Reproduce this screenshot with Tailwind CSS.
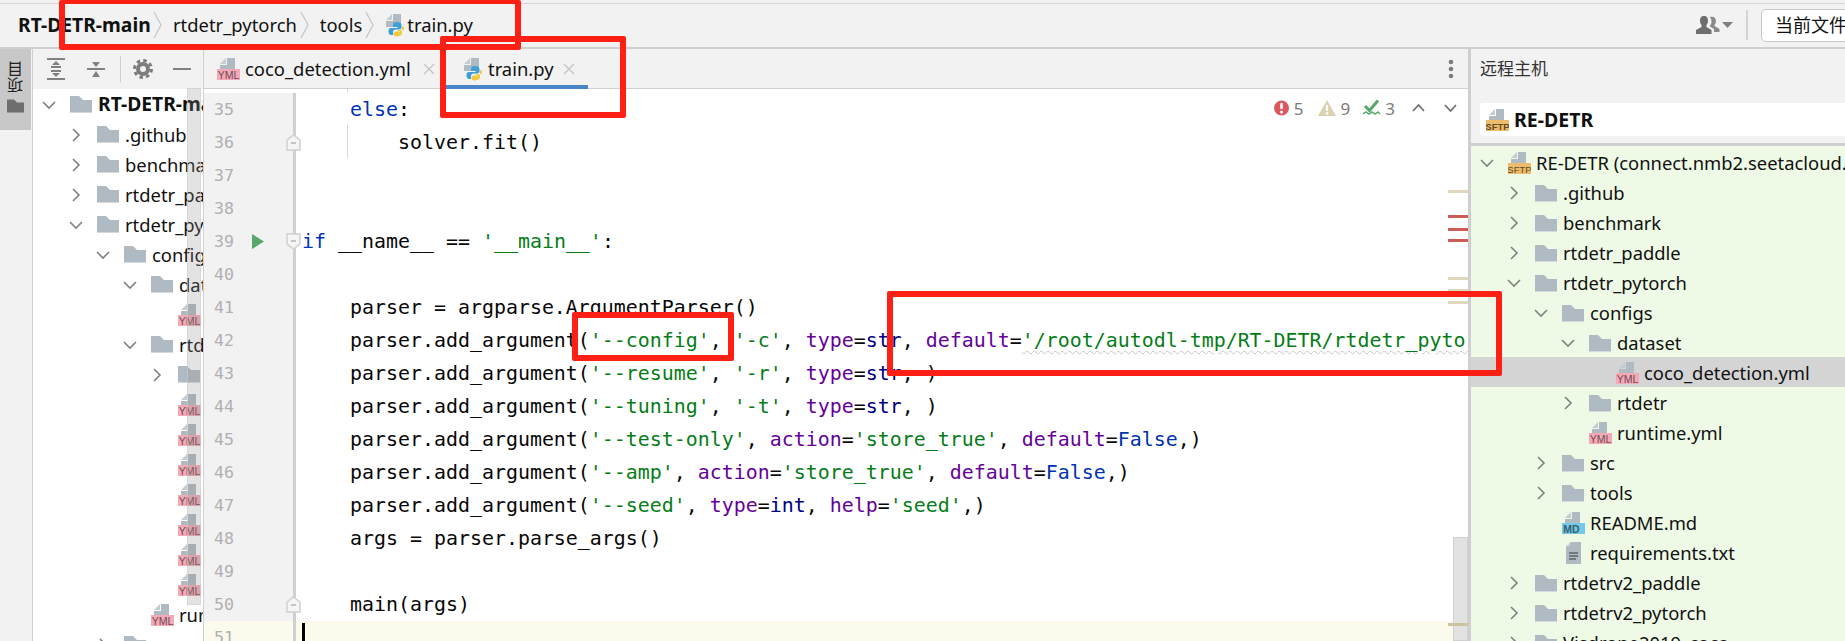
<!DOCTYPE html>
<html lang="zh">
<head>
    <meta charset="UTF-8">
    <title>train.py</title>
    <script src="https://cdn.jsdelivr.net/npm/@tailwindcss/browser@4"></script>
</head>
<body class="bg-[#f2f2f2]">
    <!-- shared icons -->
    <svg class="hidden">
        <defs>
            <symbol id="folder" viewBox="0 0 22 17"><path d="M0 0h9l4 4h9v13H0z" fill="#afbac2"/><path d="M0 16.5h22" stroke="#d3dade"/></symbol>
            <symbol id="right" viewBox="0 0 16 16"><path d="M5 2l6 6-6 6" fill="none" stroke="#808080" stroke-width="1.6"/></symbol>
            <symbol id="down" viewBox="0 0 16 16"><path d="M2 5l6 6 6-6" fill="none" stroke="#808080" stroke-width="1.6"/></symbol>
            <symbol id="sheet" viewBox="0 0 23 24"><path d="M10 1h8v11H3V8h7z" fill="#afbac2"/><path d="M9 1v6H3z" fill="#c4ccd2"/></symbol>
            <symbol id="yml" viewBox="0 0 23 24"><use href="#sheet"/><rect y="12" width="23" height="11" fill="#f5a9b6"/><text x="11.5" y="21.5" text-anchor="middle" font-size="10.5" font-family="Liberation Sans" fill="#6f4a55">YML</text></symbol>
            <symbol id="sftp" viewBox="0 0 23 24"><use href="#sheet"/><rect y="12" width="23" height="11" fill="#edbb6c"/><text x="11.5" y="21.5" text-anchor="middle" font-size="9.5" font-family="Liberation Sans" fill="#5f4a25">SFTP</text></symbol>
            <symbol id="md" viewBox="0 0 23 24"><use href="#sheet"/><rect y="12" width="23" height="11" fill="#74c9e6"/><text x="9.5" y="21.5" text-anchor="middle" font-size="10.5" font-weight="bold" font-family="Liberation Sans" fill="#35616f">MD</text></symbol>
            <symbol id="txt" viewBox="0 0 23 24"><path d="M9 1h10v22H4V6z" fill="#afbac2"/><path d="M8 1v4H4z" fill="#d5dadd"/><path d="M7 12h9M7 15h9M7 18h7" stroke="#5e6468" stroke-width="1.3"/></symbol>
            <symbol id="py" viewBox="0 0 20 24"><path d="M9 1h8v13H2V8h7z" fill="#afbac2"/><path d="M8 1v6H2z" fill="#c4ccd2"/><path d="M13 9c-3 0-4 1-4 3v2h4.500v1H7c-2 0-2.500 1.500-2.500 3.500S5.500 22 7 22h2v-2.500c0-2 1-3 3-3h3c1.500 0 2.500-1 2.500-2V12c0-2-1.500-3-4.500-3z" fill="#3f9fd8"/><path d="M14 23c3 0 4-1 4-3v-2h-4.500v-1H19c1 0 1.500-1 1.500-3.500H18v2c0 2-1 3-3 3h-3c-1.500 0-2.500 1-2.500 2v.5c0 2 1.500 2.500 4.500 2.500z" fill="#f5c93d"/></symbol>
            <symbol id="fold" viewBox="0 0 15 17"><path d="M1 6l6.500-5L14 6v10H1z" fill="#f5f5f5" stroke="#d0d0d0" stroke-width="1.500"/><path d="M5 9h5" stroke="#b5b5b5" stroke-width="1.500"/></symbol>
        </defs>
    </svg>

    <div class="relative w-[1845px] h-[641px] overflow-hidden flex flex-col bg-[#f2f2f2] text-[18.4px] text-[#111] font-['Noto_Sans','Noto_Sans_CJK_SC',sans-serif]">

        <!-- top toolbar -->
        <div class="h-[49px] shrink-0 border-b-2 border-[#cfcfcf] flex flex-col">
            <div class="h-[4px] shrink-0 border-b border-[#d6d6d6]"></div>
            <div class="flex-1 flex items-center pl-[18px] pb-[1px] [&_svg]:shrink-0">
                <span class="font-bold text-[19.3px] w-[132px] whitespace-nowrap">RT-DETR-main</span>
                <svg class="w-[10px] h-[28px] ml-[3px] mr-[10px]" viewBox="0 0 10 28"><path d="M1 1l7 13-7 13" fill="none" stroke="#c4c4c4" stroke-width="1.200"/></svg>
                <span class="whitespace-nowrap">rtdetr_pytorch</span>
                <svg class="w-[10px] h-[28px] ml-[3px] mr-[10px]" viewBox="0 0 10 28"><path d="M1 1l7 13-7 13" fill="none" stroke="#c4c4c4" stroke-width="1.200"/></svg>
                <span>tools</span>
                <svg class="w-[10px] h-[28px] ml-[3px] mr-[9px]" viewBox="0 0 10 28"><path d="M1 1l7 13-7 13" fill="none" stroke="#c4c4c4" stroke-width="1.200"/></svg>
                <svg class="w-[20px] h-[24px] mr-[3px]"><use href="#py"/></svg>
                <span>train.py</span>
                <div class="ml-auto -mr-[16px] flex items-center">
                    <svg class="w-[24px] h-[20px]" viewBox="0 0 24 20"><path d="M8 1c3 0 4 2 4 5 0 2-1 3-1.500 4v2l5 3v4H0v-4l5.500-3v-2C5 9 4 8 4 6c0-3 1-5 4-5z" fill="#6e6e6e"/><path d="M14 2c3-1 6 0 6 4 0 2-1 3-1.500 4v1l5 3v3H18v-3l-4-2.500v-1c1-1 1.500-2.500 1.500-4 0-1.500-.5-3-1.500-4.500z" fill="#8a8a8a"/></svg>
                    <svg class="w-[11px] h-[6px] ml-[2px]" viewBox="0 0 11 6"><path d="M0 0h11L5.500 6z" fill="#808080"/></svg>
                    <div class="w-[2px] h-[30px] bg-[#d4d4d4] ml-[13px] mr-[13px]"></div>
                    <div class="w-[100px] h-[33px] bg-white border border-[#c8c8c8] rounded-[5px] pl-[13px] flex items-center whitespace-nowrap text-[18px]">当前文件</div>
                </div>
            </div>
        </div>

        <div class="flex-1 flex min-h-0">
            <!-- left tool stripe -->
            <div class="w-[33px] shrink-0 border-r border-[#cfcfcf]">
                <div class="w-[31px] h-[81px] bg-[#c8c8c8] flex flex-col items-center pt-[12px] gap-[6px]">
                    <span class="[writing-mode:vertical-rl] rotate-180 text-[16px] leading-none text-[#222]">项目</span>
                    <svg class="w-[17px] h-[14px] shrink-0" viewBox="0 0 22 17"><path d="M0 0h9l4 4h9v13H0z" fill="#6e6e6e"/></svg>
                </div>
            </div>

            <!-- project panel -->
            <div class="relative w-[170px] shrink-0 overflow-hidden flex flex-col">
                <div class="h-[40px] shrink-0 flex items-center [&_svg]:shrink-0">
                    <svg class="w-[18px] h-[22px] ml-[14px]" viewBox="0 0 18 22"><path d="M0 1h18M0 21h18M4 9h10M4 13h10" stroke="#808080" stroke-width="2"/><path d="M9 3l4 4H5zM9 19l4-4H5z" fill="#808080"/></svg>
                    <svg class="w-[18px] h-[22px] ml-[22px]" viewBox="0 0 18 22"><path d="M0 11h18" stroke="#808080" stroke-width="2"/><path d="M9 9L5 4h8zM9 13l4 6H5z" fill="#808080"/></svg>
                    <div class="w-[1px] h-[26px] bg-[#d0d0d0] ml-[15px]"></div>
                    <svg class="w-[20px] h-[20px] ml-[12px]" viewBox="0 0 20 20"><circle cx="10" cy="10" r="5" fill="none" stroke="#7d7d7d" stroke-width="4"/><circle cx="10" cy="10" r="8.500" fill="none" stroke="#7d7d7d" stroke-width="3" stroke-dasharray="3.500 3.170"/></svg>
                    <div class="w-[18px] h-[2px] bg-[#808080] ml-[20px]"></div>
                </div>
                <div class="flex-1 bg-white whitespace-nowrap [&_svg]:shrink-0 [&>div]:pt-[1px]">
                    <div class="flex items-center h-[30px] pl-[8px]"><svg class="w-[16px] h-[16px] mr-[13px]"><use href="#down"/></svg><svg class="w-[22px] h-[17px] mr-[6px]"><use href="#folder"/></svg><b class="text-[19.3px]">RT-DETR-main</b></div>
                    <div class="flex items-center h-[30px] pl-[35px]"><svg class="w-[16px] h-[16px] mr-[13px]"><use href="#right"/></svg><svg class="w-[22px] h-[17px] mr-[6px]"><use href="#folder"/></svg>.github</div>
                    <div class="flex items-center h-[30px] pl-[35px]"><svg class="w-[16px] h-[16px] mr-[13px]"><use href="#right"/></svg><svg class="w-[22px] h-[17px] mr-[6px]"><use href="#folder"/></svg>benchmark</div>
                    <div class="flex items-center h-[30px] pl-[35px]"><svg class="w-[16px] h-[16px] mr-[13px]"><use href="#right"/></svg><svg class="w-[22px] h-[17px] mr-[6px]"><use href="#folder"/></svg>rtdetr_paddle</div>
                    <div class="flex items-center h-[30px] pl-[35px]"><svg class="w-[16px] h-[16px] mr-[13px]"><use href="#down"/></svg><svg class="w-[22px] h-[17px] mr-[6px]"><use href="#folder"/></svg>rtdetr_pytorch</div>
                    <div class="flex items-center h-[30px] pl-[62px]"><svg class="w-[16px] h-[16px] mr-[13px]"><use href="#down"/></svg><svg class="w-[22px] h-[17px] mr-[6px]"><use href="#folder"/></svg>configs</div>
                    <div class="flex items-center h-[30px] pl-[89px]"><svg class="w-[16px] h-[16px] mr-[13px]"><use href="#down"/></svg><svg class="w-[22px] h-[17px] mr-[6px]"><use href="#folder"/></svg>dataset</div>
                    <div class="flex items-center h-[30px] pl-[145px]"><svg class="w-[23px] h-[24px]"><use href="#yml"/></svg></div>
                    <div class="flex items-center h-[30px] pl-[89px]"><svg class="w-[16px] h-[16px] mr-[13px]"><use href="#down"/></svg><svg class="w-[22px] h-[17px] mr-[6px]"><use href="#folder"/></svg>rtdetr</div>
                    <div class="flex items-center h-[30px] pl-[116px]"><svg class="w-[16px] h-[16px] mr-[13px]"><use href="#right"/></svg><svg class="w-[22px] h-[17px] mr-[6px]"><use href="#folder"/></svg></div>
                    <div class="flex items-center h-[30px] pl-[145px]"><svg class="w-[23px] h-[24px]"><use href="#yml"/></svg></div>
                    <div class="flex items-center h-[30px] pl-[145px]"><svg class="w-[23px] h-[24px]"><use href="#yml"/></svg></div>
                    <div class="flex items-center h-[30px] pl-[145px]"><svg class="w-[23px] h-[24px]"><use href="#yml"/></svg></div>
                    <div class="flex items-center h-[30px] pl-[145px]"><svg class="w-[23px] h-[24px]"><use href="#yml"/></svg></div>
                    <div class="flex items-center h-[30px] pl-[145px]"><svg class="w-[23px] h-[24px]"><use href="#yml"/></svg></div>
                    <div class="flex items-center h-[30px] pl-[145px]"><svg class="w-[23px] h-[24px]"><use href="#yml"/></svg></div>
                    <div class="flex items-center h-[30px] pl-[145px]"><svg class="w-[23px] h-[24px]"><use href="#yml"/></svg></div>
                    <div class="flex items-center h-[30px] pl-[118px]"><svg class="w-[23px] h-[24px] mr-[5px]"><use href="#yml"/></svg>runtime.yml</div>
                    <div class="flex items-center h-[30px] pl-[62px]"><svg class="w-[16px] h-[16px] mr-[13px]"><use href="#right"/></svg><svg class="w-[22px] h-[17px] mr-[6px]"><use href="#folder"/></svg>src</div>
                </div>
                <!-- panel scrollbar -->
                <div class="absolute left-[154px] top-[39px] w-[14px] h-[517px] bg-[#8f8f8f]/25 border border-[#cfcfcf]/60"></div>
            </div>

            <!-- editor -->
            <div class="relative w-[1265px] shrink-0 flex flex-col border-l border-[#d0d0d0]">
                <div class="h-[40px] shrink-0 border-b border-[#d0d0d0] flex [&_svg]:shrink-0">
                    <div class="w-[241px] flex items-center pl-[13px] whitespace-nowrap">
                        <svg class="w-[23px] h-[24px] mr-[5px]"><use href="#yml"/></svg>coco_detection.yml
                        <svg class="w-[12px] h-[12px] ml-[12px]" viewBox="0 0 12 12"><path d="M1 1l10 10M11 1L1 11" stroke="#c4c4c4" stroke-width="1.300"/></svg>
                    </div>
                    <div class="w-[143px] h-[40px] flex items-center pl-[17px] border-b-4 border-[#4a86c7] whitespace-nowrap pt-[3px]">
                        <svg class="w-[20px] h-[24px] mr-[6px]"><use href="#py"/></svg>train.py
                        <svg class="w-[12px] h-[12px] ml-[9px]" viewBox="0 0 12 12"><path d="M1 1l10 10M11 1L1 11" stroke="#c4c4c4" stroke-width="1.300"/></svg>
                    </div>
                    <svg class="w-[6px] h-[20px] ml-auto mr-[14px] self-center" viewBox="0 0 6 20"><circle cx="3" cy="3" r="2.300" fill="#7d7d7d"/><circle cx="3" cy="10" r="2.300" fill="#7d7d7d"/><circle cx="3" cy="17" r="2.300" fill="#7d7d7d"/></svg>
                </div>

                <div class="relative flex-1 overflow-hidden bg-white flex">
                    <div class="flex-1 min-w-0 pt-[4px] font-['DejaVu_Sans_Mono',monospace] text-[19.93px] text-[#080808]">
                        <div class="flex h-[33px]"><div class="relative w-[92px] shrink-0 bg-[#f2f2f2] border-r-[3px] border-[#d0d0d0] pl-[10px] text-[16.6px] leading-[33px] text-[#b0b0b0]">35</div><div class="pl-[6px] leading-[33px] whitespace-pre">    <span class="text-[#0033b3]">else</span>:</div></div>
                        <div class="flex h-[33px]"><div class="relative w-[92px] shrink-0 bg-[#f2f2f2] border-r-[3px] border-[#d0d0d0] pl-[10px] text-[16.6px] leading-[33px] text-[#b0b0b0]">36<svg class="absolute left-[82px] top-[8px] w-[15px] h-[17px]"><use href="#fold"/></svg></div><div class="pl-[6px] leading-[33px] whitespace-pre">        solver.fit()</div></div>
                        <div class="flex h-[33px]"><div class="relative w-[92px] shrink-0 bg-[#f2f2f2] border-r-[3px] border-[#d0d0d0] pl-[10px] text-[16.6px] leading-[33px] text-[#b0b0b0]">37</div></div>
                        <div class="flex h-[33px]"><div class="relative w-[92px] shrink-0 bg-[#f2f2f2] border-r-[3px] border-[#d0d0d0] pl-[10px] text-[16.6px] leading-[33px] text-[#b0b0b0]">38</div></div>
                        <div class="flex h-[33px]"><div class="relative w-[92px] shrink-0 bg-[#f2f2f2] border-r-[3px] border-[#d0d0d0] pl-[10px] text-[16.6px] leading-[33px] text-[#b0b0b0]">39<svg class="absolute left-[48px] top-[9px] w-[12px] h-[15px]" viewBox="0 0 12 15"><path d="M0 0l12 7.500L0 15z" fill="#59a869"/></svg><svg class="absolute left-[82px] top-[8px] w-[15px] h-[17px] rotate-180"><use href="#fold"/></svg></div><div class="pl-[6px] leading-[33px] whitespace-pre"><span class="text-[#0033b3]">if</span> __name__ == <span class="text-[#067d17]">'__main__'</span>:</div></div>
                        <div class="flex h-[33px]"><div class="relative w-[92px] shrink-0 bg-[#f2f2f2] border-r-[3px] border-[#d0d0d0] pl-[10px] text-[16.6px] leading-[33px] text-[#b0b0b0]">40</div></div>
                        <div class="flex h-[33px]"><div class="relative w-[92px] shrink-0 bg-[#f2f2f2] border-r-[3px] border-[#d0d0d0] pl-[10px] text-[16.6px] leading-[33px] text-[#b0b0b0]">41</div><div class="pl-[6px] leading-[33px] whitespace-pre">    parser = argparse.ArgumentParser()</div></div>
                        <div class="flex h-[33px]"><div class="relative w-[92px] shrink-0 bg-[#f2f2f2] border-r-[3px] border-[#d0d0d0] pl-[10px] text-[16.6px] leading-[33px] text-[#b0b0b0]">42</div><div class="pl-[6px] leading-[33px] whitespace-pre">    parser.add_argument(<span class="text-[#067d17]">'--config'</span>, <span class="text-[#067d17]">'-c'</span>, <span class="text-[#660099]">type</span>=<span class="text-[#000080]">str</span>, <span class="text-[#660099]">default</span>=<span class="text-[#067d17] underline decoration-wavy decoration-[#c8c8c8] decoration-1 underline-offset-[3px]">'/root/autodl-tmp/RT-DETR/rtdetr_pytorch/configs/dataset/coco_detection.yml'</span>,)</div></div>
                        <div class="flex h-[33px]"><div class="relative w-[92px] shrink-0 bg-[#f2f2f2] border-r-[3px] border-[#d0d0d0] pl-[10px] text-[16.6px] leading-[33px] text-[#b0b0b0]">43</div><div class="pl-[6px] leading-[33px] whitespace-pre">    parser.add_argument(<span class="text-[#067d17]">'--resume'</span>, <span class="text-[#067d17]">'-r'</span>, <span class="text-[#660099]">type</span>=<span class="text-[#000080]">str</span>, )</div></div>
                        <div class="flex h-[33px]"><div class="relative w-[92px] shrink-0 bg-[#f2f2f2] border-r-[3px] border-[#d0d0d0] pl-[10px] text-[16.6px] leading-[33px] text-[#b0b0b0]">44</div><div class="pl-[6px] leading-[33px] whitespace-pre">    parser.add_argument(<span class="text-[#067d17]">'--tuning'</span>, <span class="text-[#067d17]">'-t'</span>, <span class="text-[#660099]">type</span>=<span class="text-[#000080]">str</span>, )</div></div>
                        <div class="flex h-[33px]"><div class="relative w-[92px] shrink-0 bg-[#f2f2f2] border-r-[3px] border-[#d0d0d0] pl-[10px] text-[16.6px] leading-[33px] text-[#b0b0b0]">45</div><div class="pl-[6px] leading-[33px] whitespace-pre">    parser.add_argument(<span class="text-[#067d17]">'--test-only'</span>, <span class="text-[#660099]">action</span>=<span class="text-[#067d17]">'store_true'</span>, <span class="text-[#660099]">default</span>=<span class="text-[#0033b3]">False</span>,)</div></div>
                        <div class="flex h-[33px]"><div class="relative w-[92px] shrink-0 bg-[#f2f2f2] border-r-[3px] border-[#d0d0d0] pl-[10px] text-[16.6px] leading-[33px] text-[#b0b0b0]">46</div><div class="pl-[6px] leading-[33px] whitespace-pre">    parser.add_argument(<span class="text-[#067d17]">'--amp'</span>, <span class="text-[#660099]">action</span>=<span class="text-[#067d17]">'store_true'</span>, <span class="text-[#660099]">default</span>=<span class="text-[#0033b3]">False</span>,)</div></div>
                        <div class="flex h-[33px]"><div class="relative w-[92px] shrink-0 bg-[#f2f2f2] border-r-[3px] border-[#d0d0d0] pl-[10px] text-[16.6px] leading-[33px] text-[#b0b0b0]">47</div><div class="pl-[6px] leading-[33px] whitespace-pre">    parser.add_argument(<span class="text-[#067d17]">'--seed'</span>, <span class="text-[#660099]">type</span>=<span class="text-[#000080]">int</span>, <span class="text-[#660099]">help</span>=<span class="text-[#067d17]">'seed'</span>,)</div></div>
                        <div class="flex h-[33px]"><div class="relative w-[92px] shrink-0 bg-[#f2f2f2] border-r-[3px] border-[#d0d0d0] pl-[10px] text-[16.6px] leading-[33px] text-[#b0b0b0]">48</div><div class="pl-[6px] leading-[33px] whitespace-pre">    args = parser.parse_args()</div></div>
                        <div class="flex h-[33px]"><div class="relative w-[92px] shrink-0 bg-[#f2f2f2] border-r-[3px] border-[#d0d0d0] pl-[10px] text-[16.6px] leading-[33px] text-[#b0b0b0]">49</div></div>
                        <div class="flex h-[33px]"><div class="relative w-[92px] shrink-0 bg-[#f2f2f2] border-r-[3px] border-[#d0d0d0] pl-[10px] text-[16.6px] leading-[33px] text-[#b0b0b0]">50<svg class="absolute left-[82px] top-[8px] w-[15px] h-[17px]"><use href="#fold"/></svg></div><div class="pl-[6px] leading-[33px] whitespace-pre">    main(args)</div></div>
                        <div class="flex h-[33px] bg-[#fcfaed]"><div class="relative w-[92px] shrink-0 border-r-[3px] border-[#d0d0d0] pl-[10px] text-[16.6px] leading-[33px] text-[#b0b0b0]">51</div><div class="pl-[6px] pt-[2px]"><div class="w-[3px] h-[30px] bg-black"></div></div></div>
                    </div>

                    <!-- indent guides -->
                    <div class="absolute left-[143px] top-0 w-[1px] h-[3px] bg-[#d8d8d8]"></div>
                    <div class="absolute left-[143px] top-[36px] w-[1px] h-[33px] bg-[#d8d8d8]"></div>

                    <!-- inspection widget -->
                    <div class="absolute top-[10px] right-[11px] flex items-center text-[#7c7c7c] text-[17px] leading-none bg-white">
                        <svg class="w-[15px] h-[16px]" viewBox="0 0 15 16"><circle cx="7.500" cy="8" r="7.500" fill="#db5860"/><path d="M7.500 3v6" stroke="#fff" stroke-width="2.500"/><circle cx="7.500" cy="12" r="1.500" fill="#fff"/></svg>
                        <span class="ml-[5px]">5</span>
                        <svg class="w-[18px] h-[16px] ml-[14px]" viewBox="0 0 18 16"><path d="M9 0l9 16H0z" fill="#ddd2b0"/><path d="M9 5v6" stroke="#fff" stroke-width="2.200"/><circle cx="9" cy="13.300" r="1.300" fill="#fff"/></svg>
                        <span class="ml-[5px]">9</span>
                        <svg class="w-[17px] h-[18px] ml-[13px]" viewBox="0 0 17 18"><path d="M2 7l4.500 4.500L15 1.500" fill="none" stroke="#59a869" stroke-width="3"/><path d="M0 15l3-2 3 2 3-2 3 2 3-2 2 2" fill="none" stroke="#59a869" stroke-width="1.500"/></svg>
                        <span class="ml-[5px]">3</span>
                        <svg class="w-[13px] h-[8px] ml-[17px]" viewBox="0 0 13 8"><path d="M1 7l5.500-6L12 7" fill="none" stroke="#6e6e6e" stroke-width="1.700"/></svg>
                        <svg class="w-[13px] h-[8px] ml-[19px]" viewBox="0 0 13 8"><path d="M1 1l5.500 6L12 1" fill="none" stroke="#6e6e6e" stroke-width="1.700"/></svg>
                    </div>

                    <!-- scrollbar and error stripes -->
                    <div class="absolute right-0 top-[448px] w-[15px] h-[104px] bg-[#e2e2e2] border border-[#d0d0d0]"></div>
                    <div class="absolute right-0 top-[101px] w-[20px] h-[3px] bg-[#e0d8bd]"></div>
                    <div class="absolute right-0 top-[126px] w-[20px] h-[3px] bg-[#cf5b56]"></div>
                    <div class="absolute right-0 top-[139px] w-[20px] h-[3px] bg-[#cf5b56]"></div>
                    <div class="absolute right-0 top-[150px] w-[20px] h-[3px] bg-[#cf5b56]"></div>
                    <div class="absolute right-0 top-[188px] w-[20px] h-[3px] bg-[#e0d8bd]"></div>
                    <div class="absolute right-0 top-[200px] w-[20px] h-[3px] bg-[#e0d8bd]"></div>
                    <div class="absolute right-0 top-[212px] w-[20px] h-[3px] bg-[#e0d8bd]"></div>
                    <div class="absolute right-0 top-[534px] w-[20px] h-[3px] bg-[#cdc3a0]"></div>
                </div>
            </div>

            <!-- remote host panel -->
            <div class="flex-1 min-w-0 border-l-[3px] border-[#cfcfcf] flex flex-col overflow-hidden">
                <div class="h-[39px] shrink-0 flex items-center pl-[9px] text-[17px] text-[#333]">远程主机</div>
                <div class="h-[58px] shrink-0 border-b-[3px] border-[#cfcfcf] pt-[15px] pl-[9px]">
                    <div class="h-[33px] bg-white rounded-l-[3px] flex items-center pl-[6px] font-bold text-[19.5px] whitespace-nowrap">
                        <svg class="w-[23px] h-[24px] mr-[5px]"><use href="#sftp"/></svg>RE-DETR
                    </div>
                </div>
                <div class="flex-1 bg-[#eefae6] pt-[1px] whitespace-nowrap [&_svg]:shrink-0 [&>div]:pt-[2px]">
                    <div class="flex items-center h-[30px] pl-[8px]"><svg class="w-[16px] h-[16px] mr-[13px]"><use href="#down"/></svg><svg class="w-[23px] h-[24px] mr-[5px]"><use href="#sftp"/></svg>RE-DETR (connect.nmb2.seetacloud.com)</div>
                    <div class="flex items-center h-[30px] pl-[35px]"><svg class="w-[16px] h-[16px] mr-[13px]"><use href="#right"/></svg><svg class="w-[22px] h-[17px] mr-[6px]"><use href="#folder"/></svg>.github</div>
                    <div class="flex items-center h-[30px] pl-[35px]"><svg class="w-[16px] h-[16px] mr-[13px]"><use href="#right"/></svg><svg class="w-[22px] h-[17px] mr-[6px]"><use href="#folder"/></svg>benchmark</div>
                    <div class="flex items-center h-[30px] pl-[35px]"><svg class="w-[16px] h-[16px] mr-[13px]"><use href="#right"/></svg><svg class="w-[22px] h-[17px] mr-[6px]"><use href="#folder"/></svg>rtdetr_paddle</div>
                    <div class="flex items-center h-[30px] pl-[35px]"><svg class="w-[16px] h-[16px] mr-[13px]"><use href="#down"/></svg><svg class="w-[22px] h-[17px] mr-[6px]"><use href="#folder"/></svg>rtdetr_pytorch</div>
                    <div class="flex items-center h-[30px] pl-[62px]"><svg class="w-[16px] h-[16px] mr-[13px]"><use href="#down"/></svg><svg class="w-[22px] h-[17px] mr-[6px]"><use href="#folder"/></svg>configs</div>
                    <div class="flex items-center h-[30px] pl-[89px]"><svg class="w-[16px] h-[16px] mr-[13px]"><use href="#down"/></svg><svg class="w-[22px] h-[17px] mr-[6px]"><use href="#folder"/></svg>dataset</div>
                    <div class="flex items-center h-[30px] pl-[145px] bg-[#d4d4d4]"><svg class="w-[23px] h-[24px] mr-[5px]"><use href="#yml"/></svg>coco_detection.yml</div>
                    <div class="flex items-center h-[30px] pl-[89px]"><svg class="w-[16px] h-[16px] mr-[13px]"><use href="#right"/></svg><svg class="w-[22px] h-[17px] mr-[6px]"><use href="#folder"/></svg>rtdetr</div>
                    <div class="flex items-center h-[30px] pl-[118px]"><svg class="w-[23px] h-[24px] mr-[5px]"><use href="#yml"/></svg>runtime.yml</div>
                    <div class="flex items-center h-[30px] pl-[62px]"><svg class="w-[16px] h-[16px] mr-[13px]"><use href="#right"/></svg><svg class="w-[22px] h-[17px] mr-[6px]"><use href="#folder"/></svg>src</div>
                    <div class="flex items-center h-[30px] pl-[62px]"><svg class="w-[16px] h-[16px] mr-[13px]"><use href="#right"/></svg><svg class="w-[22px] h-[17px] mr-[6px]"><use href="#folder"/></svg>tools</div>
                    <div class="flex items-center h-[30px] pl-[91px]"><svg class="w-[23px] h-[24px] mr-[5px]"><use href="#md"/></svg>README.md</div>
                    <div class="flex items-center h-[30px] pl-[91px]"><svg class="w-[23px] h-[24px] mr-[5px]"><use href="#txt"/></svg>requirements.txt</div>
                    <div class="flex items-center h-[30px] pl-[35px]"><svg class="w-[16px] h-[16px] mr-[13px]"><use href="#right"/></svg><svg class="w-[22px] h-[17px] mr-[6px]"><use href="#folder"/></svg>rtdetrv2_paddle</div>
                    <div class="flex items-center h-[30px] pl-[35px]"><svg class="w-[16px] h-[16px] mr-[13px]"><use href="#right"/></svg><svg class="w-[22px] h-[17px] mr-[6px]"><use href="#folder"/></svg>rtdetrv2_pytorch</div>
                    <div class="flex items-center h-[30px] pl-[35px]"><svg class="w-[16px] h-[16px] mr-[13px]"><use href="#right"/></svg><svg class="w-[22px] h-[17px] mr-[6px]"><use href="#folder"/></svg>Visdrone2019_coco</div>
                </div>
            </div>
        </div>

        <!-- red annotation boxes drawn over the screenshot -->
        <div class="absolute left-[59px] top-0 w-[462px] h-[50px] border-[6px] border-t-[4px] border-[#ff2015] rounded-[2px]"></div>
        <div class="absolute left-[440px] top-[36px] w-[186px] h-[82px] border-[6px] border-[#ff2015] rounded-[2px]"></div>
        <div class="absolute left-[572px] top-[312px] w-[162px] h-[49px] border-[6px] border-[#ff2015] rounded-[2px]"></div>
        <div class="absolute left-[887px] top-[291px] w-[615px] h-[85px] border-[6px] border-[#ff2015] rounded-[2px]"></div>
    </div>
</body>
</html>
